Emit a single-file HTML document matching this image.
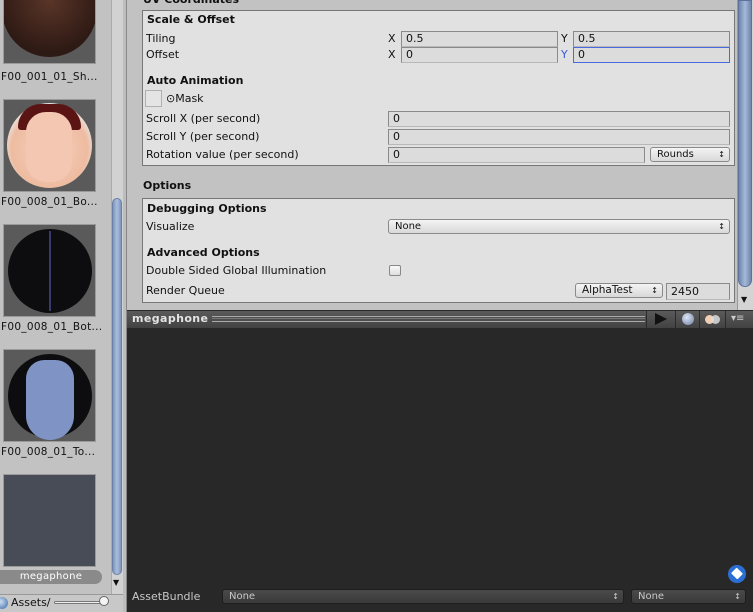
<!DOCTYPE html>
<html><head><style>
*{box-sizing:border-box;margin:0;padding:0}
body{width:753px;height:612px;overflow:hidden;background:#c2c2c2;font-family:"DejaVu Sans","Liberation Sans",sans-serif;font-size:11px;color:#111;position:relative}
.a{position:absolute}
.thumb{position:absolute;left:3px;width:93px;height:93px;background:#5a5a5a;border:1px solid #9a9a9a;overflow:hidden}
.lbl{position:absolute;left:1px;font-size:10.5px;letter-spacing:.3px;color:#111}
.fld{position:absolute;height:16px;background:#dcdcdc;border:1px solid #8a8a8a;border-bottom-color:#b8b8b8;padding-left:4px;line-height:14px;font-size:11px}
.t{position:absolute;font-size:11px}
.b{font-weight:bold}
.pop{position:absolute;height:15px;border:1px solid #8a8a8a;border-radius:3px;background:linear-gradient(#f4f4f4,#d8d8d8);font-size:10px;line-height:13px;padding-left:6px}
.pop:after{content:"\2195";position:absolute;right:4px;top:0;font-size:8px}
</style></head><body>
<div class="a" style="left:0;top:0;width:111px;height:595px;background:#c2c2c2"></div>
<div class="thumb" style="top:-29px"><div class="a" style="left:-2px;top:-10px;width:95px;height:95px;border-radius:50%;background:radial-gradient(circle at 50% 40%,#5a3528,#2e1a14 70%)"></div></div>
<div class="lbl" style="top:71px">F00_001_01_Sh...</div>
<div class="thumb" style="top:99px"><div class="a" style="left:3px;top:3px;width:85px;height:85px;border-radius:50%;background:radial-gradient(circle at 50% 55%,#f6d4c0,#eebba0 60%,#e8e8e8 75%)"></div><div class="a" style="left:14px;top:4px;width:63px;height:26px;background:#5a1414;border-radius:30px 30px 4px 4px"></div><div class="a" style="left:22px;top:12px;width:46px;height:70px;background:#f3c7b2;border-radius:20px"></div></div>
<div class="lbl" style="top:196px">F00_008_01_Bo...</div>
<div class="thumb" style="top:224px"><div class="a" style="left:4px;top:4px;width:84px;height:84px;border-radius:50%;background:#0d0d0f"></div><div class="a" style="left:45px;top:6px;width:2px;height:80px;background:#3a3a6a"></div></div>
<div class="lbl" style="top:321px">F00_008_01_Bot...</div>
<div class="thumb" style="top:349px"><div class="a" style="left:4px;top:4px;width:84px;height:84px;border-radius:50%;background:#0d0d0f"></div><div class="a" style="left:22px;top:10px;width:48px;height:80px;background:#7f93c4;border-radius:20px 20px 26px 26px"></div></div>
<div class="lbl" style="top:446px">F00_008_01_To...</div>
<div class="thumb" style="top:474px;background:#474c56"></div>
<div class="a" style="left:0;top:570px;width:102px;height:14px;background:#8a8a8a;border-radius:0 7px 7px 0;color:#fff;font-size:10px;text-align:center;line-height:14px;letter-spacing:.3px">megaphone</div>
<div class="a" style="left:111px;top:0;width:12px;height:595px;background:#d2d2d2;border-left:1px solid #aaa"></div>
<div class="a" style="left:112px;top:198px;width:10px;height:377px;background:linear-gradient(90deg,#7e96bc,#a9bddb,#7e96bc);border-radius:5px;border:1px solid #6a80a6"></div>
<div class="a" style="left:113px;top:578px;font-size:8px">▼</div>
<div class="a" style="left:0;top:594px;width:127px;height:18px;background:#c8c8c8;border-top:1px solid #999"></div>
<div class="a" style="left:-4px;top:597px;width:12px;height:12px;border-radius:50%;background:radial-gradient(circle at 40% 40%,#cde,#36a)"></div>
<div class="t" style="left:11px;top:596px;font-size:11px">Assets/</div>
<div class="a" style="left:54px;top:601px;width:50px;height:3px;border:1px solid #777;border-radius:2px;background:#eee"></div>
<div class="a" style="left:99px;top:596px;width:10px;height:10px;border-radius:50%;border:1px solid #666;background:#f4f4f4"></div>
<div class="a" style="left:123px;top:0;width:4px;height:612px;background:#bdbdbd;border-right:1px solid #888"></div>
<div class="a" style="left:127px;top:0;width:610px;height:311px;background:#c2c2c2"></div>
<div class="t b" style="left:143px;top:-7px">UV Coordinates</div>
<div class="a" style="left:142px;top:10px;width:593px;height:156px;background:#e1e1e1;border:1px solid #777"></div>
<div class="t b" style="left:147px;top:13px">Scale &amp; Offset</div>
<div class="t" style="left:146px;top:32px">Tiling</div>
<div class="t" style="left:146px;top:48px">Offset</div>
<div class="t" style="left:388px;top:32px">X</div><div class="fld" style="left:401px;top:31px;width:157px">0.5</div>
<div class="t" style="left:561px;top:32px">Y</div><div class="fld" style="left:573px;top:31px;width:157px">0.5</div>
<div class="t" style="left:388px;top:48px">X</div><div class="fld" style="left:401px;top:47px;width:157px">0</div>
<div class="t" style="left:561px;top:48px;color:#3b5bd8">Y</div><div class="fld" style="left:573px;top:47px;width:157px;border:1px solid #4a6ae0">0</div>
<div class="t b" style="left:147px;top:74px">Auto Animation</div>
<div class="a" style="left:145px;top:90px;width:17px;height:17px;background:#e4e4e4;border:1px solid #b0b0b0"></div>
<div class="t" style="left:166px;top:92px">⊙Mask</div>
<div class="t" style="left:146px;top:112px">Scroll X (per second)</div>
<div class="t" style="left:146px;top:130px">Scroll Y (per second)</div>
<div class="t" style="left:146px;top:148px">Rotation value (per second)</div>
<div class="fld" style="left:388px;top:111px;width:342px">0</div>
<div class="fld" style="left:388px;top:129px;width:342px">0</div>
<div class="fld" style="left:388px;top:147px;width:257px">0</div>
<div class="pop" style="left:650px;top:147px;width:80px">Rounds</div>
<div class="t b" style="left:143px;top:179px">Options</div>
<div class="a" style="left:142px;top:198px;width:593px;height:105px;background:#e1e1e1;border:1px solid #777"></div>
<div class="t b" style="left:147px;top:202px">Debugging Options</div>
<div class="t" style="left:146px;top:220px">Visualize</div>
<div class="pop" style="left:388px;top:219px;width:342px">None</div>
<div class="t b" style="left:147px;top:246px">Advanced Options</div>
<div class="t" style="left:146px;top:264px">Double Sided Global Illumination</div>
<div class="a" style="left:389px;top:265px;width:12px;height:11px;border:1px solid #888;border-radius:2px;background:linear-gradient(#fafafa,#ddd)"></div>
<div class="t" style="left:146px;top:284px">Render Queue</div>
<div class="pop" style="left:575px;top:283px;width:88px;font-size:10.5px">AlphaTest</div>
<div class="fld" style="left:666px;top:283px;width:64px;height:17px;line-height:15px">2450</div>
<div class="a" style="left:737px;top:0;width:16px;height:311px;background:#d4d4d4;border-left:1px solid #999"></div>
<div class="a" style="left:738px;top:0;width:14px;height:287px;background:linear-gradient(90deg,#6f86ad,#a5b9d8,#6f86ad);border-radius:0 0 7px 7px;border:1px solid #5c729a"></div>
<div class="a" style="left:741px;top:295px;font-size:8px">▼</div>
<div class="a" style="left:127px;top:310px;width:626px;height:18px;background:linear-gradient(#5a5a5a,#424242);border-top:1px solid #2a2a2a"></div>
<div class="t b" style="left:132px;top:312px;color:#e4e4e4;font-size:11px;letter-spacing:.4px">megaphone</div>
<div class="a" style="left:212px;top:316px;width:433px;height:6px;border-top:1px solid #aaa;border-bottom:1px solid #aaa"></div>
<div class="a" style="left:212px;top:318px;width:433px;height:2px;border-top:1px solid #777"></div>
<div class="a" style="left:646px;top:311px;width:1px;height:17px;background:#2a2a2a"></div>
<div class="a" style="left:655px;top:313px;width:0;height:0;border-left:12px solid #111;border-top:6px solid transparent;border-bottom:6px solid transparent"></div>
<div class="a" style="left:675px;top:311px;width:1px;height:17px;background:#2a2a2a"></div>
<div class="a" style="left:682px;top:313px;width:12px;height:12px;border-radius:50%;background:radial-gradient(circle at 40% 35%,#dfe6f3,#6a7ea3)"></div>
<div class="a" style="left:699px;top:311px;width:1px;height:17px;background:#2a2a2a"></div>
<div class="a" style="left:705px;top:315px;width:9px;height:9px;border-radius:50%;background:#f0cfb5"></div>
<div class="a" style="left:711px;top:315px;width:9px;height:9px;border-radius:50%;background:#ddd;opacity:.85"></div>
<div class="a" style="left:725px;top:311px;width:1px;height:17px;background:#2a2a2a"></div>
<div class="t" style="left:731px;top:313px;color:#ccc;font-size:10px">▾≡</div>
<div class="a" style="left:127px;top:328px;width:626px;height:284px;background:#282828"></div>
<div class="a" style="left:728px;top:565px;width:18px;height:18px;border-radius:50%;background:#2c6fd4"></div>
<div class="a" style="left:733px;top:569px;width:8px;height:9px;background:#fff;transform:rotate(-45deg);border-radius:1px"></div>
<div class="t" style="left:132px;top:590px;color:#c8c8c8;font-size:11px">AssetBundle</div>
<div class="pop" style="left:222px;top:589px;width:402px;background:linear-gradient(#4a4a4a,#3a3a3a);border-color:#1e1e1e;color:#c8c8c8">None</div>
<div class="pop" style="left:631px;top:589px;width:115px;background:linear-gradient(#4a4a4a,#3a3a3a);border-color:#1e1e1e;color:#c8c8c8">None</div>
</body></html>
